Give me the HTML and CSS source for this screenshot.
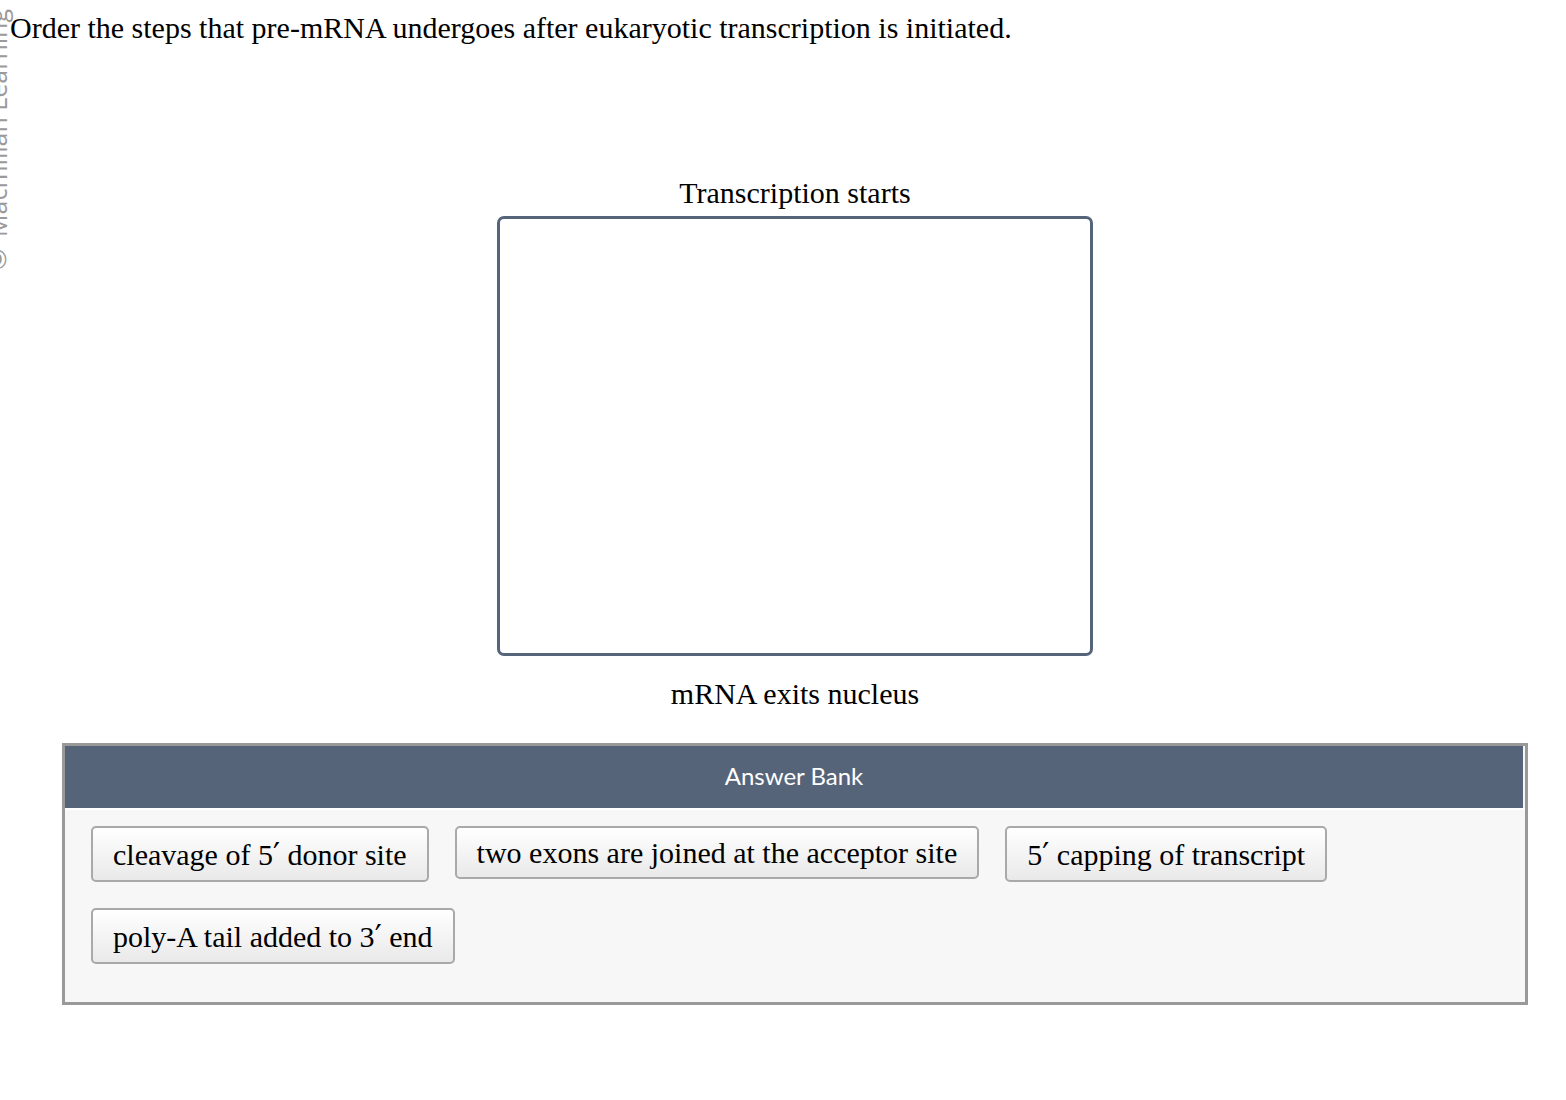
FILE: index.html
```html
<!DOCTYPE html>
<html>
<head>
<meta charset="utf-8">
<link rel="stylesheet" href="styles.css">
</head>
<body>
<span class="watermark">© Macmillan Learning</span>
<p class="prompt">Order the steps that pre-mRNA undergoes after eukaryotic transcription is initiated.</p>
<div class="sequence">
  <div class="label">Transcription starts</div>
  <div class="dropzone"></div>
  <div class="label label-end">mRNA exits nucleus</div>
</div>
<div class="bank">
  <div class="bank-header">Answer Bank</div>
  <div class="bank-body">
    <div class="chip tall">cleavage of 5<span class="prime">′</span> donor site</div>
    <div class="chip">two exons are joined at the acceptor site</div>
    <div class="chip tall">5<span class="prime">′</span> capping of transcript</div>
    <div class="chip tall">poly-A tail added to 3<span class="prime">′</span> end</div>
  </div>
</div>
</body>
</html>
```
FILE: styles.css
```css
html, body {
  margin: 0;
  padding: 0;
  background: #ffffff;
}
body {
  font-family: "Liberation Serif", "Times New Roman", serif;
  color: #000;
  position: relative;
  width: 1566px;
  height: 1100px;
  overflow: hidden;
}
.watermark {
  position: absolute;
  left: -19px;
  top: 9px;
  writing-mode: vertical-rl;
  transform: rotate(180deg);
  font-family: "Open Sans", "Liberation Sans", sans-serif;
  font-size: 25px;
  line-height: 32px;
  color: #9a9a9a;
  white-space: nowrap;
}
.prompt {
  margin: 0;
  padding: 11px 0 0 10px;
  font-size: 30px;
  line-height: 34px;
}
.sequence {
  display: flex;
  flex-direction: column;
  align-items: center;
  padding-top: 131px;
  margin-left: 24px;
}
.label {
  font-size: 30px;
  line-height: 34px;
  margin-bottom: 6px;
}
.label-end {
  margin: 21px 0 0;
}
.dropzone {
  width: 590px;
  height: 434px;
  border: 3px solid #56647a;
  border-radius: 7px;
}
.bank {
  margin: 32px 38px 0 62px;
  border: 3px solid #999999;
  background: #f7f7f7;
}
.bank-header {
  height: 62px;
  line-height: 60px;
  margin-right: 2px;
  background: #56647a;
  color: #ffffff;
  text-align: center;
  font-family: Lato, "Open Sans", sans-serif;
  font-size: 24px;
}
.bank-body {
  display: flex;
  flex-wrap: wrap;
  align-items: flex-start;
  gap: 26px;
  padding: 18px 26px 38px;
  box-shadow: inset 0 2px 0 #ffffff;
}
.chip {
  border: 2px solid #a9a9a9;
  border-radius: 5px;
  background: linear-gradient(#ffffff, #e9e9e9);
  padding: 7px 20px;
  font-size: 30px;
  line-height: 35px;
  white-space: nowrap;
}
.chip.tall {
  padding-top: 9px;
  padding-bottom: 8px;
}
.prime {
  display: inline-block;
  font-family: "DejaVu Serif", serif;
  font-size: 31px;
  line-height: 34px;
  vertical-align: top;
}
```
